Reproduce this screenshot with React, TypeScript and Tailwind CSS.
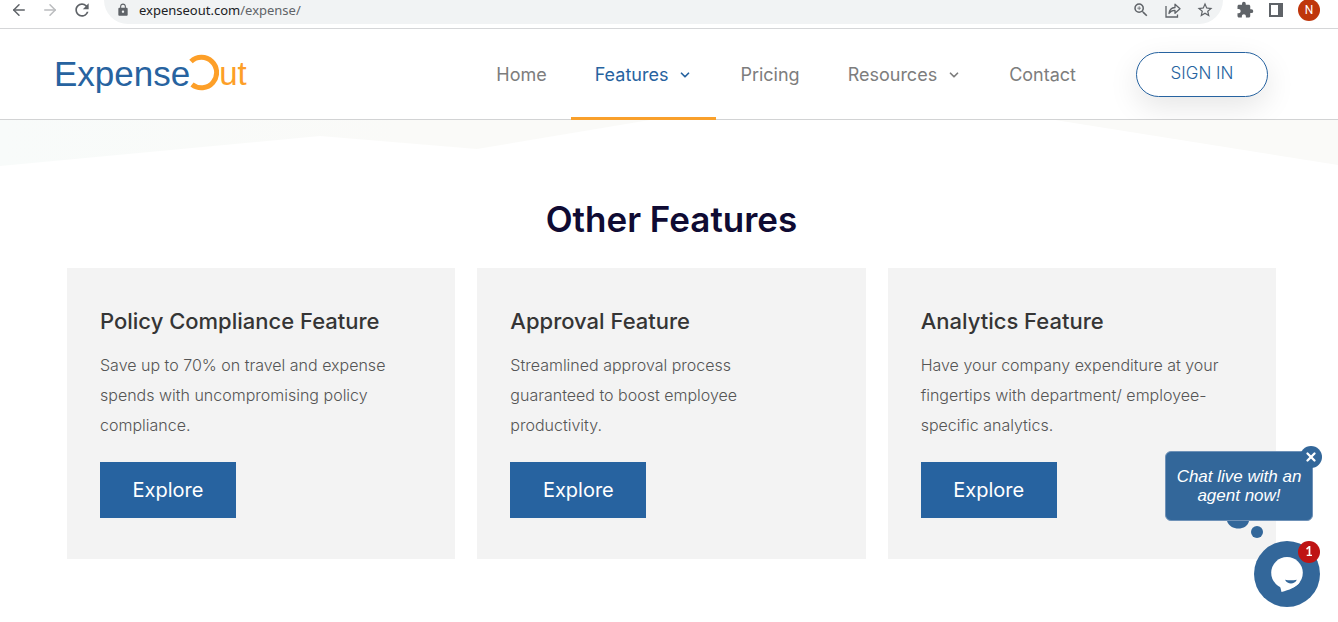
import { ArrowLeft, ArrowRight, ChevronDown, X } from "lucide-react";
import { MdExtension, MdLock, MdOutlineZoomIn, MdRefresh, MdStarBorder } from "react-icons/md";

const navItems = [
  { label: "Home", hasMenu: false, active: false },
  { label: "Features", hasMenu: true, active: true },
  { label: "Pricing", hasMenu: false, active: false },
  { label: "Resources", hasMenu: true, active: false },
  { label: "Contact", hasMenu: false, active: false },
];

const features = [
  {
    title: "Policy Compliance Feature",
    text: "Save up to 70% on travel and expense spends with uncompromising policy compliance.",
  },
  {
    title: "Approval Feature",
    text: "Streamlined approval process guaranteed to boost employee productivity.",
  },
  {
    title: "Analytics Feature",
    text: "Have your company expenditure at your fingertips with department/ employee-specific analytics.",
  },
];

function BrowserBar() {
  return (
    <div className="flex h-[29px] items-start border-b border-[#d5d6d8] bg-white pl-[10px] pr-[18px] text-[#5f6368]">
      <div className="flex h-5 items-center gap-[13px]">
        <button aria-label="Back">
          <ArrowLeft size={18} />
        </button>
        <button aria-label="Forward" className="text-[#babcbe]">
          <ArrowRight size={18} />
        </button>
        <button aria-label="Reload">
          <MdRefresh size={20} />
        </button>
      </div>
      <div className="ml-3 flex h-6 flex-1 items-start rounded-b-full bg-[#f1f3f4] pl-3 pr-[9px]">
        <div className="flex h-5 flex-1 items-center">
          <MdLock size={14} />
          <span className="ml-[9px] pt-px font-['Noto_Sans',sans-serif] text-[13px] text-[#202124]">
            expenseout.com<span className="text-[#5f6368]">/expense/</span>
          </span>
          <div className="ml-auto flex items-center gap-[14px]">
            <button aria-label="Zoom">
              <MdOutlineZoomIn size={18} />
            </button>
            <button aria-label="Share">
              <ShareIcon />
            </button>
            <button aria-label="Bookmark">
              <MdStarBorder size={18} />
            </button>
          </div>
        </div>
      </div>
      <div className="ml-[13px] flex h-5 items-center gap-[13px]">
        <button aria-label="Extensions">
          <MdExtension size={18} />
        </button>
        <button aria-label="Side panel">
          <SidePanelIcon />
        </button>
        <button
          aria-label="Profile"
          className="flex size-[22px] items-center justify-center rounded-full bg-[#bf360c] font-['Roboto',sans-serif] text-xs text-white"
        >
          N
        </button>
      </div>
    </div>
  );
}

function ShareIcon() {
  return (
    <svg width="18" height="18" viewBox="0 0 18 18" fill="none" stroke="currentColor" strokeWidth="1.3">
      <path d="M2 5V16H13.500V13.500" />
      <path d="M5 12.500C5.300 8.800 7.300 6.800 11 6.500V3.200L16 7.800L11 12.300V9.400C8.300 9.300 6.500 10.200 5 12.500Z" strokeLinejoin="round" />
    </svg>
  );
}

function SidePanelIcon() {
  return (
    <svg width="18" height="18" viewBox="-2 -2 18 18" fill="currentColor">
      <path fillRule="evenodd" d="M0 0H14V14H0ZM2 2V12H9V2Z" />
    </svg>
  );
}

function Logo() {
  return (
    <a href="/" aria-label="ExpenseOut" className="flex items-center pb-[2px] leading-none">
      <span className="font-['Liberation_Sans',sans-serif] text-[35px] text-[#2763a0]">Expense</span>
      <svg className="-ml-[2px]" width="31" height="38" viewBox="0 0 31 38" fill="none" stroke="#fd9f28" strokeWidth="5">
        <path d="M3 7.500A15.200 15.200 0 1 1 4 30.500" />
      </svg>
      <span className="font-['Liberation_Sans',sans-serif] text-[33px] text-[#fd9f28]">ut</span>
    </a>
  );
}

function Header() {
  return (
    <header className="flex h-[91px] items-stretch border-b border-[#d2d3d4] bg-white pl-[54px] pr-[70px]">
      <Logo />
      <nav className="ml-auto flex">
        {navItems.map((item) => (
          <a
            key={item.label}
            href={`/${item.label.toLowerCase()}`}
            className={`-mb-px flex items-center gap-[10px] border-b-[3px] px-6 pt-1 font-['Inter',sans-serif] text-lg ${
              item.active ? "border-[#f9a02b] text-[#2763a0]" : "border-transparent text-[#7d7d7d]"
            }`}
          >
            {item.label}
            {item.hasMenu && <ChevronDown size={14} strokeWidth={3} />}
          </a>
        ))}
      </nav>
      <button className="ml-9 h-[45px] w-[132px] self-center rounded-full border border-[#2763a0] bg-white font-['Inter',sans-serif] text-[17px] font-light text-[#2763a0] shadow-[0_10px_30px_rgba(0,0,0,0.1)]">
        SIGN IN
      </button>
    </header>
  );
}

function Backdrop() {
  return (
    <svg className="block h-[46px] w-full" viewBox="0 0 1338 46" preserveAspectRatio="none">
      <defs>
        <linearGradient id="tint" gradientUnits="userSpaceOnUse" x1="0" y1="0" x2="400" y2="0">
          <stop offset="0" stopColor="#f8fbfa" />
          <stop offset="1" stopColor="#fafaf8" />
        </linearGradient>
      </defs>
      <path d="M0 0H650L477 29L320 16L0 46Z" fill="url(#tint)" />
      <path d="M1055 0H1338V45Z" fill="#fafaf8" />
    </svg>
  );
}

function ChatWidget() {
  return (
    <aside className="fixed bottom-[15px] right-[18px] flex flex-col items-end">
      <div className="relative mr-[7px] flex h-[70px] w-[148px] items-center justify-center rounded-md border border-[#6f92b8] bg-[#33679a] text-center font-['Liberation_Sans',sans-serif] text-[17px] italic leading-[19px] text-white">
        <p>
          Chat live with an
          <br />
          agent now!
        </p>
        <button
          aria-label="Close"
          className="absolute -right-[10px] -top-[6px] flex size-[22px] items-center justify-center rounded-full bg-[#33679a]"
        >
          <X size={14} strokeWidth={4} />
        </button>
      </div>
      <svg className="mr-[55px] block" width="38" height="20" viewBox="0 0 38 20" fill="#33679a">
        <path d="M0 0H22C20 10 3 10 0 0Z" />
        <circle cx="30" cy="11" r="6" />
      </svg>
      <button aria-label="Open chat" className="relative flex size-[66px] items-center justify-center rounded-full bg-[#33679a]">
        <svg width="34" height="36" viewBox="0 0 34 36">
          <circle cx="17" cy="16.800" r="15.800" fill="#fff" />
          <path d="M10 30L11.500 36C19 34 26 31.500 30 26Z" fill="#fff" />
          <path d="M15 23.700C19 24.500 22.500 24.500 26.800 23.700C24.500 28.800 17.500 28.800 15 23.700Z" fill="#33679a" />
        </svg>
        <span className="absolute right-0 top-0 flex size-[22px] items-center justify-center rounded-full bg-[#bf1414] font-['Lato',sans-serif] text-[13px] font-bold text-white">
          1
        </span>
      </button>
    </aside>
  );
}

export default function App() {
  return (
    <div className="min-h-screen bg-white">
      <BrowserBar />
      <Header />
      <Backdrop />
      <main className="pb-16 pl-[67px] pr-[62px] pt-[33px] font-['Inter',sans-serif]">
        <h2 className="text-center text-[35px] font-semibold leading-10 text-[#0f0b33]">Other Features</h2>
        <div className="mt-[29px] grid grid-cols-3 gap-[22px]">
          {features.map((feature) => (
            <section key={feature.title} className="bg-[#f3f3f3] pb-[41px] pl-[33px] pr-12 pt-[38px]">
              <h3 className="text-[22px] font-medium leading-[30px] text-[#353535]">{feature.title}</h3>
              <p className="mt-[14px] text-base font-light leading-[30px] text-[#555]">{feature.text}</p>
              <button className="mt-[22px] h-14 w-[136px] bg-[#2763a0] text-xl text-white">Explore</button>
            </section>
          ))}
        </div>
      </main>
      <ChatWidget />
    </div>
  );
}
